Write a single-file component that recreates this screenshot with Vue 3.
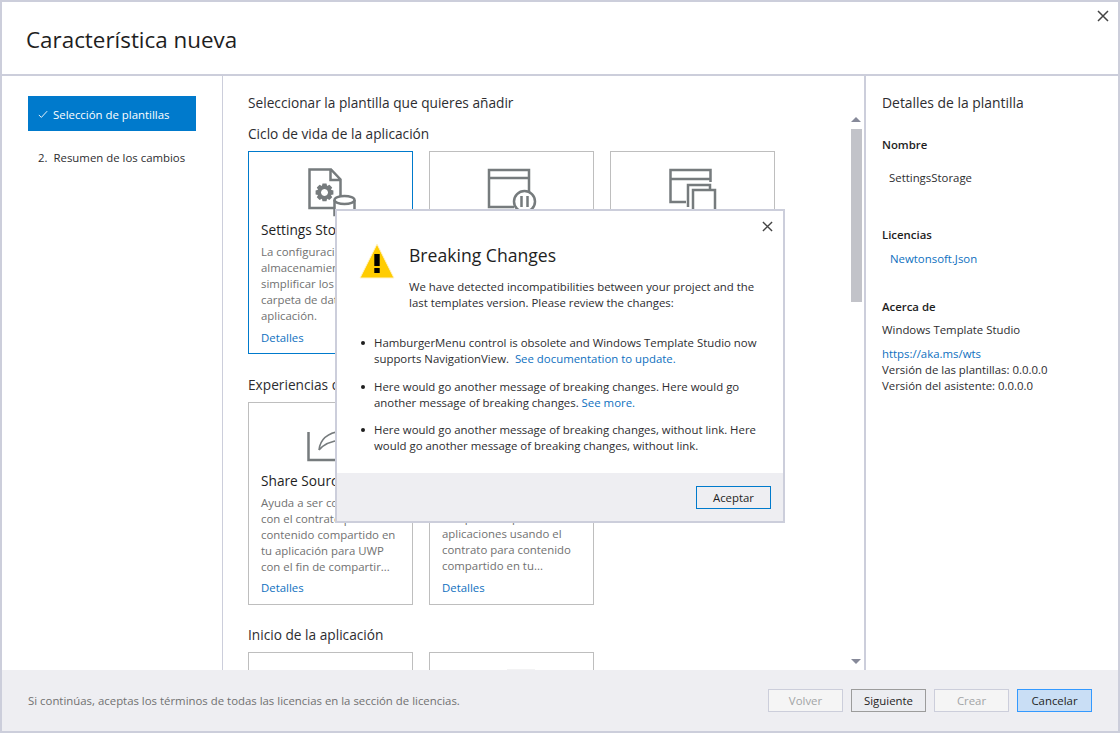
<script setup>
const footerButtons = [
  { label: 'Volver', cls: 'disabled' },
  { label: 'Siguiente', cls: 'normal' },
  { label: 'Crear', cls: 'disabled' },
  { label: 'Cancelar', cls: 'focused' }
]
</script>

<template>
  <div class="window">
    <header class="head">
      <h1>Característica nueva</h1>
      <svg class="close" viewBox="0 0 12 12"><path d="M1 1l10 10M11 1L1 11" /></svg>
    </header>
    <div class="body">
      <nav class="steps">
        <div class="step active">
          <svg viewBox="0 0 12 10"><path d="M1 5.500l3 3 7-7.500" /></svg>
          <span>Selección de plantillas</span>
        </div>
        <div class="step"><span class="num">2.</span><span>Resumen de los cambios</span></div>
      </nav>

      <main class="center">
        <div class="scroll">
          <h2 class="pick">Seleccionar la plantilla que quieres añadir</h2>

          <h2 class="group">Ciclo de vida de la aplicación</h2>
          <div class="cards">
            <article class="card selected">
              <svg class="ico" viewBox="0 0 48 48">
                <path class="st" d="M28 40H2.500V1.500H24l9.500 10V28M23.500 1.500v10.500h10" />
                <path class="fill" fill-rule="evenodd" d="M15.500 15.500h4l.6 2.500 2.300-1.300 2.800 2.800-1.300 2.300 2.500.6v4l-2.500.6 1.300 2.300-2.800 2.800-2.300-1.300-.6 2.500h-4l-.6-2.500-2.300 1.300-2.800-2.800 1.300-2.300-2.500-.6v-4l2.500-.6-1.300-2.300 2.800-2.800 2.300 1.300zM17.500 21a3.500 3.500 0 1 0 .01 0z" />
                <path class="st" d="M27.500 32v15h20V32" />
                <ellipse class="st" cx="37.500" cy="32" rx="10" ry="4" />
              </svg>
              <h3>Settings Storage</h3>
              <p>
                <span>La configuración de</span>
                <span>almacenamiento para</span>
                <span>simplificar los ajustes</span>
                <span>carpeta de datos de la</span>
                <span>aplicación.</span>
              </p>
              <a class="more">Detalles</a>
            </article>
            <article class="card">
              <svg class="ico" viewBox="0 0 48 48">
                <path class="st nofill" d="M26 39H1v-37h40v24M1 10h40" />
                <circle class="st" cx="36.500" cy="33.500" r="10.500" />
                <path class="st" d="M33.500 28v11M39.500 28v11" />
              </svg>
            </article>
            <article class="card">
              <svg class="ico" viewBox="0 0 48 48">
                <path class="st nofill" d="M17 34H1.500V2h40v12M1.500 11h40" />
                <path class="st nofill" d="M19 39V17h22v4" />
                <path class="st" d="M24 22h22v25H24z" />
              </svg>
            </article>
          </div>

          <h2 class="group">Experiencias de usuario</h2>
          <div class="cards second">
            <article class="card">
              <svg class="ico" viewBox="0 0 48 48">
                <path class="st nofill" d="M1.500 13v28h46" />
                <path class="leaf" d="M12 31C13 21 20 14 34 12M12 31C17 25 24 22 34 21" />
              </svg>
              <h3>Share Source</h3>
              <p>
                <span>Ayuda a ser compatible</span>
                <span>con el contrato para</span>
                <span>contenido compartido en</span>
                <span>tu aplicación para UWP</span>
                <span>con el fin de compartir...</span>
              </p>
              <a class="more">Detalles</a>
            </article>
            <article class="card">
              <p class="tail">
                <span>compartidos por otras</span>
                <span>aplicaciones usando el</span>
                <span>contrato para contenido</span>
                <span>compartido en tu...</span>
              </p>
              <a class="more">Detalles</a>
            </article>
          </div>

          <h2 class="group last">Inicio de la aplicación</h2>
          <div class="cards">
            <article class="card"></article>
            <article class="card"><i class="peek"></i></article>
          </div>
        </div>
        <div class="bar">
          <i class="arrow up"></i>
          <i class="thumb"></i>
          <i class="arrow down"></i>
        </div>
      </main>

      <aside class="details">
        <h2>Detalles de la plantilla</h2>
        <h4 class="d-name">Nombre</h4>
        <div class="d-val">SettingsStorage</div>
        <h4 class="d-lic">Licencias</h4>
        <a class="d-link">Newtonsoft.Json</a>
        <h4 class="d-about">Acerca de</h4>
        <div class="d-line d-wts">Windows Template Studio</div>
        <a class="d-line d-url">https://aka.ms/wts</a>
        <div class="d-line">Versión de las plantillas: 0.0.0.0</div>
        <div class="d-line">Versión del asistente: 0.0.0.0</div>
      </aside>
    </div>
    <footer class="foot">
      <span class="terms">Si continúas, aceptas los términos de todas las licencias en la sección de licencias.</span>
      <div class="btns">
        <button v-for="b in footerButtons" :key="b.label" :class="b.cls">{{ b.label }}</button>
      </div>
    </footer>

    <section class="modal">
      <svg class="m-close" viewBox="0 0 12 12"><path d="M1 1l10 10M11 1L1 11" /></svg>
      <div class="m-main">
        <div class="m-top">
          <svg class="warn" viewBox="0 0 36 38">
            <path d="M18 1L35 35H1z" fill="#fc0" stroke="#fff3cc" stroke-width="1" stroke-linejoin="round" />
            <path d="M15.300 11h5.400v12h-5.400zM15.300 25h5.400v5h-5.400z" fill="#000" />
          </svg>
          <div>
            <h2>Breaking Changes</h2>
            <p>We have detected incompatibilities between your project and the last templates version. Please review the changes:</p>
          </div>
        </div>
        <ul>
          <li>HamburgerMenu control is obsolete and Windows Template Studio now supports NavigationView. &nbsp;<a>See documentation to update.</a></li>
          <li>Here would go another message of breaking changes. Here would go another message of breaking changes. <a>See more.</a></li>
          <li>Here would go another message of breaking changes, without link. Here would go another message of breaking changes, without link.</li>
        </ul>
      </div>
      <div class="m-foot"><button>Aceptar</button></div>
    </section>
  </div>
</template>

<style>
html, body { margin: 0; background: #fff; }
</style>

<style scoped>
* { box-sizing: border-box; }
.window {
  position: relative;
  width: 1120px;
  height: 733px;
  border: 2px solid #cccedb;
  display: flex;
  flex-direction: column;
  font-family: "Open Sans", "Noto Sans", sans-serif;
  font-size: 11.400px;
  color: #2d2d30;
  background: #fff;
  overflow: hidden;
}
h1, h2, h3, h4, p, ul { margin: 0; padding: 0; font-weight: 400; }
a { color: #0e70c0; }

.head {
  height: 74px;
  flex: none;
  border-bottom: 2px solid #cccedb;
  padding: 22px 0 0 24px;
  position: relative;
}
.head h1 { font-size: 22.400px; line-height: 32px; color: #1e1e1e; }
.close { position: absolute; top: 8px; right: 9px; width: 12px; height: 12px; }
.close path, .m-close path { stroke: #444; stroke-width: 1.500; fill: none; }

.body { flex: 1; display: flex; min-height: 0; }
.steps {
  width: 221px;
  flex: none;
  border-right: 1px solid #cccedb;
  padding: 20px 26px;
}
.step {
  height: 35px;
  display: flex;
  align-items: center;
  padding-left: 10px;
  color: #2d2d30;
  gap: 5px;
}
.step.active { background: #007acc; color: #fff; padding-top: 1px; }
.step.active svg { width: 10px; height: 9px; flex: none; }
.step.active path { stroke: #fff; stroke-width: 1.100; fill: none; }
.step:not(.active) { margin-top: 9px; }
.step .num { margin-right: 1px; }

.center { flex: 1; display: flex; min-width: 0; border-right: 2px solid #cccedb; overflow: hidden; }
.scroll { flex: 1; padding: 17px 0 0 25px; min-width: 0; overflow: hidden; }
.pick { font-size: 13.700px; line-height: 20px; color: #2d2d30; }
.group { font-size: 13.700px; line-height: 20px; color: #2d2d30; margin-top: 11px; }
.cards { display: flex; gap: 16px; margin-top: 7px; }
.cards + .group { margin-top: 21px; }
.cards + .group.last { margin-top: 20px; }
.card {
  width: 165px;
  height: 203px;
  flex: none;
  border: 1px solid #bebebe;
  padding: 16px 12px 0;
  display: flex;
  flex-direction: column;
  position: relative;
  background: #fff;
}
.card.selected { border-color: #007acc; }
.ico { width: 48px; height: 48px; align-self: center; margin-bottom: 4px; overflow: visible; }
.st { stroke: #767b7d; stroke-width: 2.500; fill: #fff; }
.nofill { fill: none; }
.fill { fill: #767b7d; }
.leaf { stroke: #767b7d; stroke-width: 1.600; fill: none; }
.card h3 { font-size: 13.700px; line-height: 20px; white-space: nowrap; color: #1e1e1e; }
.card p { margin-top: 4px; color: #717171; line-height: 16px; }
.card p.tail { margin-top: 91px; }
.card p span { display: block; white-space: nowrap; }
.more { position: absolute; left: 12px; top: 178px; line-height: 16px; }
.second .more { top: 177px; }
.peek { position: absolute; left: 77px; top: 16px; width: 28px; height: 2px; background: #f3f3f4; }

.bar { width: 14px; margin-right: 1px; flex: none; position: relative; }
.thumb { position: absolute; left: 2px; top: 53px; width: 11px; height: 173px; background: #c2c3c9; }
.arrow { position: absolute; left: 2px; width: 0; height: 0; border-left: 5.500px solid transparent; border-right: 5.500px solid transparent; }
.arrow.up { top: 41px; border-bottom: 5px solid #868999; }
.arrow.down { top: 583px; border-top: 5px solid #868999; }

.details { width: 252px; flex: none; padding: 17px 16px; }
.details h2 { font-size: 13.900px; line-height: 20px; color: #2d2d30; }
.details h4 { font-weight: 600; line-height: 16px; color: #1e1e1e; }
.d-name { margin-top: 24px; }
.d-val { margin: 17px 0 0 7px; line-height: 16px; }
.d-lic { margin-top: 41px; }
.d-link { display: block; margin: 8px 0 0 8px; line-height: 16px; }
.d-about { margin-top: 32px; }
.d-line { display: block; line-height: 16px; }
.d-wts { margin-top: 7px; }
.d-url { margin-top: 8px; }

.foot {
  height: 61px;
  flex: none;
  background: #eeeef2;
  display: flex;
  align-items: center;
  padding: 0 26px;
  justify-content: space-between;
  position: relative;
}
.terms { color: #717171; }
.btns { display: flex; gap: 8px; }
button {
  width: 75px;
  height: 23px;
  font: inherit;
  padding: 0;
  border: 1px solid #adadad;
  background: #eeeef2;
  color: #1e1e1e;
}
button.disabled { background: #f5f5f5; border-color: #cccedb; color: #a2a4a5; }
button.normal { background: #ecedf1; border-color: #9c9c9c; }
button.focused { background: #c9def5; border-color: #3399ff; }

.modal {
  position: absolute;
  left: 333px;
  top: 207px;
  width: 450px;
  height: 314px;
  border: 2px solid #cccedb;
  background: #fff;
  display: flex;
  flex-direction: column;
}
.m-close { position: absolute; top: 10px; right: 10px; width: 11px; height: 11px; }
.m-main { flex: 1; padding: 32px 24px 0; }
.m-top { display: flex; gap: 14px; }
.warn { width: 36px; height: 38px; flex: none; margin-left: -2px; }
.m-top h2 { font-size: 17.600px; line-height: 24px; color: #1e1e1e; }
.m-top p { margin-top: 12px; line-height: 16px; width: 352px; color: #2d2d30; }
ul { list-style: none; margin-top: 24px; }
li { position: relative; padding-left: 13px; line-height: 16px; margin-bottom: 11.500px; width: 402px; color: #2d2d30; }
li::before { content: ""; position: absolute; left: 0; top: 6px; width: 4px; height: 4px; border-radius: 50%; background: #1e1e1e; }
.m-foot {
  height: 48px;
  flex: none;
  background: #eeeef2;
  display: flex;
  justify-content: flex-end;
  align-items: center;
  padding-right: 12px;
}
.m-foot button { border-color: #007acc; background: #eeeef2; }
</style>
